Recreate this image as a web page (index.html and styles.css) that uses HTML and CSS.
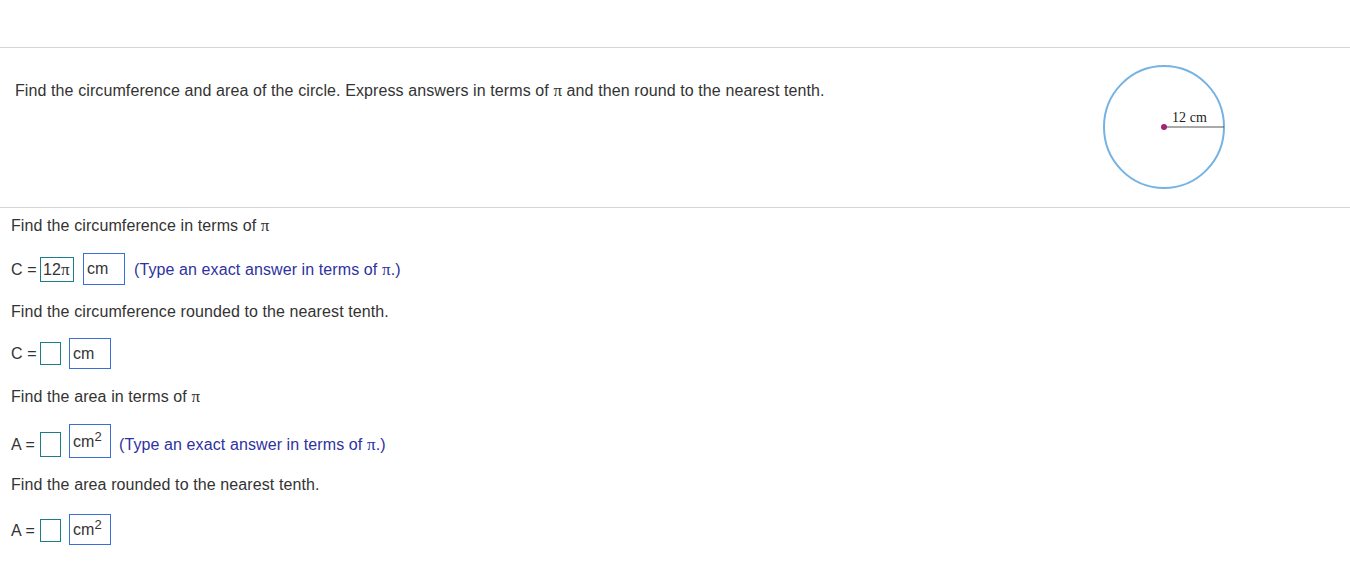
FILE: index.html
```html
<!DOCTYPE html>
<html>
<head>
<meta charset="utf-8">
<link rel="stylesheet" href="styles.css">
</head>
<body>
<div class="page">
  <div class="topbar"></div>
  <div class="question">
    <p class="prompt">Find the circumference and area of the circle. Express answers in terms of <span class="pi">π</span> and then round to the nearest tenth.</p>
    <svg class="figure" width="124" height="126" viewBox="0 0 124 126">
      <ellipse cx="62" cy="62" rx="60" ry="61" fill="none" stroke="#74b3e3" stroke-width="2"/>
      <line x1="62" y1="62" x2="122" y2="62" stroke="#555" stroke-width="1.2"/>
      <circle cx="62" cy="62" r="3" fill="#a3237a"/>
      <text x="70" y="57" font-family="Liberation Serif, serif" font-size="14" fill="#222">12 cm</text>
    </svg>
  </div>
  <div class="answers">
    <p class="step s1">Find the circumference in terms of <span class="pi">π</span></p>
    <div class="row r1">
      <span class="label">C =</span>
      <span class="answer filled">12<span class="pi">π</span></span>
      <span class="unit">cm</span>
      <span class="hint">(Type an exact answer in terms of <span class="pi">π</span>.)</span>
    </div>
    <p class="step s2">Find the circumference rounded to the nearest tenth.</p>
    <div class="row r2">
      <span class="label">C =</span>
      <span class="answer"></span>
      <span class="unit">cm</span>
    </div>
    <p class="step s3">Find the area in terms of <span class="pi">π</span></p>
    <div class="row r3">
      <span class="label">A =</span>
      <span class="answer"></span>
      <span class="unit sq">cm<sup>2</sup></span>
      <span class="hint">(Type an exact answer in terms of <span class="pi">π</span>.)</span>
    </div>
    <p class="step s4">Find the area rounded to the nearest tenth.</p>
    <div class="row r4">
      <span class="label">A =</span>
      <span class="answer"></span>
      <span class="unit sq">cm<sup>2</sup></span>
    </div>
  </div>
</div>
</body>
</html>
```
FILE: styles.css
```css
* { box-sizing: border-box; }
html, body { margin: 0; padding: 0; background: #fff; }
body {
  font-family: "Liberation Sans", Arial, sans-serif;
  color: #333;
  font-size: 16px;
  letter-spacing: 0.1px;
}
.pi { font-family: "Liberation Serif", "Times New Roman", serif; font-size: 17px; }
.topbar { height: 48px; border-bottom: 1px solid #d3d3dc; }
.question {
  height: 160px;
  border-bottom: 1px solid #d3d3dc;
  display: flex;
  justify-content: space-between;
  align-items: flex-start;
  padding-left: 15px;
}
.prompt {
  margin: 34px 0 0;
  font-size: 16px;
  line-height: 18px;
}
.figure { margin: 17px 124px 0 0; display: block; }
.answers { padding: 8px 0 0 11px; }
.step { margin: 0; font-size: 16px; line-height: 18px; padding-top: 1px; }
.row { display: flex; align-items: center; font-size: 16px; }
.s1 { margin-bottom: 18px; }
.r1 { height: 32px; margin-bottom: 17px; }
.s2 { margin-bottom: 17px; }
.r2 { height: 31px; margin-bottom: 18px; }
.s3 { margin-bottom: 18px; }
.r3 { height: 34px; margin-bottom: 17px; }
.s4 { margin-bottom: 20px; }
.r4 { height: 31px; }
.label { width: 29px; }
.r1 .label, .r1 .hint { padding-top: 2px; }
.answer {
  border: 1px solid #1c7c8c;
  width: 21px;
  height: 23px;
  display: flex;
  align-items: center;
  padding-left: 2px;
}
.answer.filled { width: 34px; height: 25px; padding-top: 1px; }
.r3 .answer { height: 25px; }
.r3 .label, .r3 .answer, .r3 .hint { margin-top: 7px; }
.r4 .label, .r4 .answer { margin-top: 2px; }
.unit {
  margin-left: 8px;
  border: 1px solid #3a6fd5;
  width: 42px;
  height: 31px;
  display: flex;
  align-items: center;
  padding-left: 3px;
}
.r1 .unit { margin-left: 9px; height: 32px; }
.unit.sq { height: 31px; align-items: flex-end; padding-bottom: 5px; }
.r3 .unit.sq { height: 34px; padding-bottom: 6px; }
.unit sup {
  font-size: 13px;
  line-height: 1;
  position: relative;
  top: -8px;
  vertical-align: baseline;
}
.hint { margin-left: 8px; color: #2e32a0; }
.r1 .hint { margin-left: 9px; }
```
